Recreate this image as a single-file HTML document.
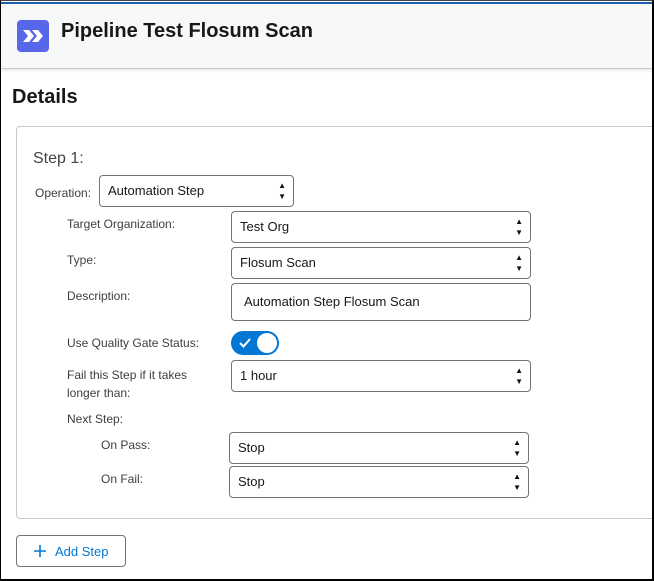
<!DOCTYPE html><html><head><style>
*{box-sizing:border-box;margin:0;padding:0}
body{width:654px;height:581px;background:#fff;font-family:"Liberation Sans",sans-serif;position:relative;overflow:hidden;color:#181818}
.a{position:absolute}
.frame{left:0;top:0;width:654px;height:581px;border-left:1px solid #000;border-right:2px solid #000;border-bottom:2px solid #000;border-top:1px solid #444}
.hdr{left:1px;top:2px;width:651px;height:67px;background:#f7f8fa;border-top:2px solid #1b5fa8;border-bottom:1px solid #c9c9c9;box-shadow:0 2px 2px rgba(0,0,0,.08)}
.lbl{font-size:12px;color:#3e3e3c}
.sel{border:1px solid #747474;border-radius:4px;background:#fff;font-size:13px;color:#181818;padding-left:8px;padding-bottom:2px;display:flex;align-items:center}
.arr{position:absolute;right:7px;top:50%;transform:translateY(-50%);font-size:8px;line-height:11px;color:#111;text-align:center}
</style></head><body>
<div class="a hdr"></div>
<div class="a" style="left:17px;top:20px;width:32px;height:32px;background:#5867e8;border-radius:4px">
<svg width="32" height="32" viewBox="0 0 32 32"><path d="M6 10h6l5 6-5 6H6l5-6z M15 10h6l5 6-5 6h-6l5-6z" fill="#fff"/></svg></div>
<div class="a" style="left:61px;top:20px;font-size:20px;font-weight:bold">Pipeline Test Flosum Scan</div>
<div class="a" style="left:12px;top:86px;font-size:20px;font-weight:bold">Details</div>
<div class="a" style="left:16px;top:126px;width:645px;height:393px;border:1px solid #c9c9c9;border-radius:4px"></div>
<div class="a" style="left:33px;top:150px;font-size:16px;color:#444">Step 1:</div>
<div class="a lbl" style="left:35px;top:186px">Operation:</div>
<div class="a sel" style="left:99px;top:175px;width:195px;height:32px">Automation Step<div class="arr">▲<br>▼</div></div>
<div class="a lbl" style="left:67px;top:217px">Target Organization:</div>
<div class="a sel" style="left:231px;top:211px;width:300px;height:32px">Test Org<div class="arr">▲<br>▼</div></div>
<div class="a lbl" style="left:67px;top:253px">Type:</div>
<div class="a sel" style="left:231px;top:247px;width:300px;height:32px">Flosum Scan<div class="arr">▲<br>▼</div></div>
<div class="a lbl" style="left:67px;top:289px">Description:</div>
<div class="a sel" style="left:231px;top:283px;width:300px;height:38px;padding-left:12px">Automation Step Flosum Scan</div>
<div class="a lbl" style="left:67px;top:336px">Use Quality Gate Status:</div>
<div class="a" style="left:231px;top:331px;width:48px;height:24px;background:#0176d3;border-radius:12px">
<svg class="a" style="left:7px;top:6px" width="14" height="12"><path d="M2 6l3.5 3.5L12 2" stroke="#fff" stroke-width="2" fill="none"/></svg>
<div class="a" style="left:26px;top:2px;width:20px;height:20px;border-radius:50%;background:#fff"></div></div>
<div class="a lbl" style="left:67px;top:366px;line-height:18px">Fail this Step if it takes<br>longer than:</div>
<div class="a sel" style="left:231px;top:360px;width:300px;height:32px">1 hour<div class="arr">▲<br>▼</div></div>
<div class="a lbl" style="left:67px;top:412px">Next Step:</div>
<div class="a lbl" style="left:101px;top:438px">On Pass:</div>
<div class="a sel" style="left:229px;top:432px;width:300px;height:32px">Stop<div class="arr">▲<br>▼</div></div>
<div class="a lbl" style="left:101px;top:472px">On Fail:</div>
<div class="a sel" style="left:229px;top:466px;width:300px;height:32px">Stop<div class="arr">▲<br>▼</div></div>
<div class="a" style="left:16px;top:535px;width:110px;height:32px;border:1px solid #747474;border-radius:4px;color:#0176d3;font-size:13px;display:flex;align-items:center;padding-left:16px">
<svg width="14" height="14" style="margin-right:8px"><path d="M7 1v12M1 7h12" stroke="#0176d3" stroke-width="1.6"/></svg>Add Step</div>
<div class="a frame"></div>
</body></html>
